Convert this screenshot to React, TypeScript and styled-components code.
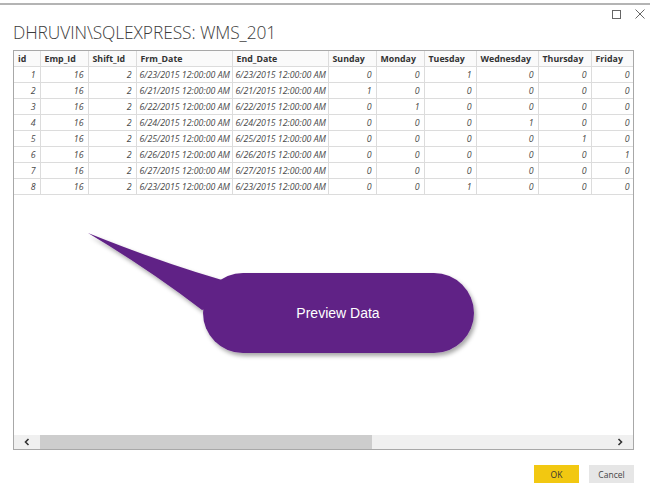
import React from 'react';
import styled, { createGlobalStyle } from 'styled-components';

const GlobalStyle = createGlobalStyle`
  html, body {
    margin: 0;
    padding: 0;
    background: #ffffff;
  }
  body {
    font-family: 'Open Sans', 'Noto Sans', sans-serif;
  }
`;

const Dialog = styled.div`
  position: relative;
  width: 650px;
  height: 488px;
  overflow: hidden;
  background: #ffffff;
`;

const TopEdge = styled.div`
  height: 3px;
  border-bottom: 2px solid #b4b4b4;
`;

const Controls = styled.div`
  display: flex;
  justify-content: flex-end;
  align-items: center;
  gap: 12px;
  height: 18px;
  padding-right: 4px;
`;

const ControlButton = styled.span`
  display: flex;
  align-items: center;
  justify-content: center;
  width: 12px;
  height: 12px;
  color: #666;
`;

const Title = styled.h1`
  margin: 0;
  padding: 0 0 0 13px;
  height: 27px;
  font-family: 'Open Sans', 'Noto Sans', sans-serif;
  font-weight: 300;
  font-size: 17.4px;
  line-height: 19px;
  color: #3c3c3c;
  letter-spacing: -0.1px;
`;

const Frame = styled.div`
  margin: 0 16px 0 13px;
  height: 398px;
  border: 1px solid #a8a8a8;
  display: flex;
  flex-direction: column;
  overflow: hidden;
`;

const Grid = styled.div`
  flex: 1;
  overflow: hidden;
`;

const Table = styled.table`
  border-collapse: collapse;
  table-layout: fixed;
  width: 620px;
  font-family: 'Open Sans', 'Noto Sans', sans-serif;
  font-size: 8.8px;
`;

const HeadCell = styled.th`
  height: 15px;
  padding: 0 4px;
  text-align: left;
  font-weight: 700;
  color: #333;
  background: #fafafa;
  border-right: 1px solid #dcdcdc;
  border-bottom: 1px solid #dcdcdc;
  white-space: nowrap;
  overflow: hidden;
`;

const Cell = styled.td<{ $align: 'left' | 'right' }>`
  height: 15px;
  padding: 0 ${p => (p.$align === 'left' ? '3px' : '4px')};
  text-align: ${p => p.$align};
  font-style: italic;
  color: #4a4a4a;
  border-right: 1px solid #dcdcdc;
  border-bottom: 1px solid #dcdcdc;
  white-space: nowrap;
  overflow: hidden;
`;

const Scrollbar = styled.div`
  display: flex;
  align-items: center;
  height: 14px;
  background: #f0f0f0;
`;

const Arrow = styled.span`
  display: flex;
  align-items: center;
  justify-content: center;
  width: 26px;
  height: 14px;
  color: #333;
`;

const Track = styled.div`
  flex: 1;
  height: 14px;
  display: flex;
`;

const Thumb = styled.div`
  height: 14px;
  background: #cdcdcd;
`;

const Footer = styled.div`
  display: flex;
  justify-content: flex-end;
  gap: 10px;
  padding: 15px 16px 0 0;
`;

const Button = styled.button<{ $primary?: boolean }>`
  width: 45px;
  height: 18px;
  border: none;
  padding: 0;
  font-family: 'Open Sans', 'Noto Sans', sans-serif;
  font-size: 8.5px;
  color: ${p => (p.$primary ? '#333' : '#444')};
  background: ${p => (p.$primary ? '#f2c811' : '#e6e6e6')};
`;

const Callout = styled.svg`
  position: absolute;
  left: 0;
  top: 0;
  pointer-events: none;
`;

const columns = [
  { name: 'id', width: 26, align: 'right' },
  { name: 'Emp_Id', width: 48, align: 'right' },
  { name: 'Shift_Id', width: 48, align: 'right' },
  { name: 'Frm_Date', width: 96, align: 'left' },
  { name: 'End_Date', width: 96, align: 'left' },
  { name: 'Sunday', width: 48, align: 'right' },
  { name: 'Monday', width: 48, align: 'right' },
  { name: 'Tuesday', width: 52, align: 'right' },
  { name: 'Wednesday', width: 62, align: 'right' },
  { name: 'Thursday', width: 53, align: 'right' },
  { name: 'Friday', width: 43, align: 'right' },
] as const;

const days = ['6/23', '6/21', '6/22', '6/24', '6/25', '6/26', '6/27', '6/23'];
const flags = [
  [0, 0, 1, 0, 0, 0],
  [1, 0, 0, 0, 0, 0],
  [0, 1, 0, 0, 0, 0],
  [0, 0, 0, 1, 0, 0],
  [0, 0, 0, 0, 1, 0],
  [0, 0, 0, 0, 0, 1],
  [0, 0, 0, 0, 0, 0],
  [0, 0, 1, 0, 0, 0],
];

const rows = days.map((d, i) => {
  const date = `${d}/2015 12:00:00 AM`;
  return [String(i + 1), '16', '2', date, date, ...flags[i].map(String)];
});

export default function App() {
  return (
    <Dialog>
      <GlobalStyle />
      <TopEdge />
      <Controls>
        <ControlButton>
          <svg width="9" height="9" viewBox="0 0 9 9">
            <rect x="0.5" y="0.5" width="8" height="8" fill="none" stroke="#666" />
          </svg>
        </ControlButton>
        <ControlButton>
          <svg width="10" height="10" viewBox="0 0 10 10">
            <path d="M0.5 0.5 L9.5 9.5 M9.5 0.5 L0.5 9.5" stroke="#666" strokeWidth="1" />
          </svg>
        </ControlButton>
      </Controls>
      <Title>DHRUVIN\SQLEXPRESS: WMS_201</Title>
      <Frame>
        <Grid>
          <Table>
            <colgroup>
              {columns.map(c => (
                <col key={c.name} style={{ width: c.width }} />
              ))}
            </colgroup>
            <thead>
              <tr>
                {columns.map(c => (
                  <HeadCell key={c.name}>{c.name}</HeadCell>
                ))}
              </tr>
            </thead>
            <tbody>
              {rows.map((r, i) => (
                <tr key={i}>
                  {r.map((v, j) => (
                    <Cell key={j} $align={columns[j].align}>
                      {v}
                    </Cell>
                  ))}
                </tr>
              ))}
            </tbody>
          </Table>
        </Grid>
        <Scrollbar>
          <Arrow>
            <svg width="8" height="8" viewBox="0 0 8 8">
              <path d="M5.5 1 L2.5 4 L5.5 7" fill="none" stroke="#333" strokeWidth="1.6" />
            </svg>
          </Arrow>
          <Track>
            <Thumb style={{ width: 332 }} />
          </Track>
          <Arrow>
            <svg width="8" height="8" viewBox="0 0 8 8">
              <path d="M2.5 1 L5.5 4 L2.5 7" fill="none" stroke="#333" strokeWidth="1.6" />
            </svg>
          </Arrow>
        </Scrollbar>
      </Frame>
      <Footer>
        <Button $primary>OK</Button>
        <Button>Cancel</Button>
      </Footer>
      <Callout width="650" height="488" viewBox="0 0 650 488">
        <defs>
          <filter id="shadow" x="-10%" y="-10%" width="130%" height="140%">
            <feDropShadow dx="2" dy="3" stdDeviation="2" floodColor="#000" floodOpacity="0.35" />
          </filter>
        </defs>
        <g filter="url(#shadow)" fill="#612286">
          <path d="M88 233 Q160 262 222 280 L232 300 L202 310 Q150 270 88 233 Z" />
          <rect x="203" y="273" width="271" height="80" rx="40" ry="40" />
        </g>
        <text
          x="338"
          y="318"
          textAnchor="middle"
          fill="#ffffff"
          fontFamily="'Liberation Sans', Arial, sans-serif"
          fontSize="14"
        >
          Preview Data
        </text>
      </Callout>
    </Dialog>
  );
}
